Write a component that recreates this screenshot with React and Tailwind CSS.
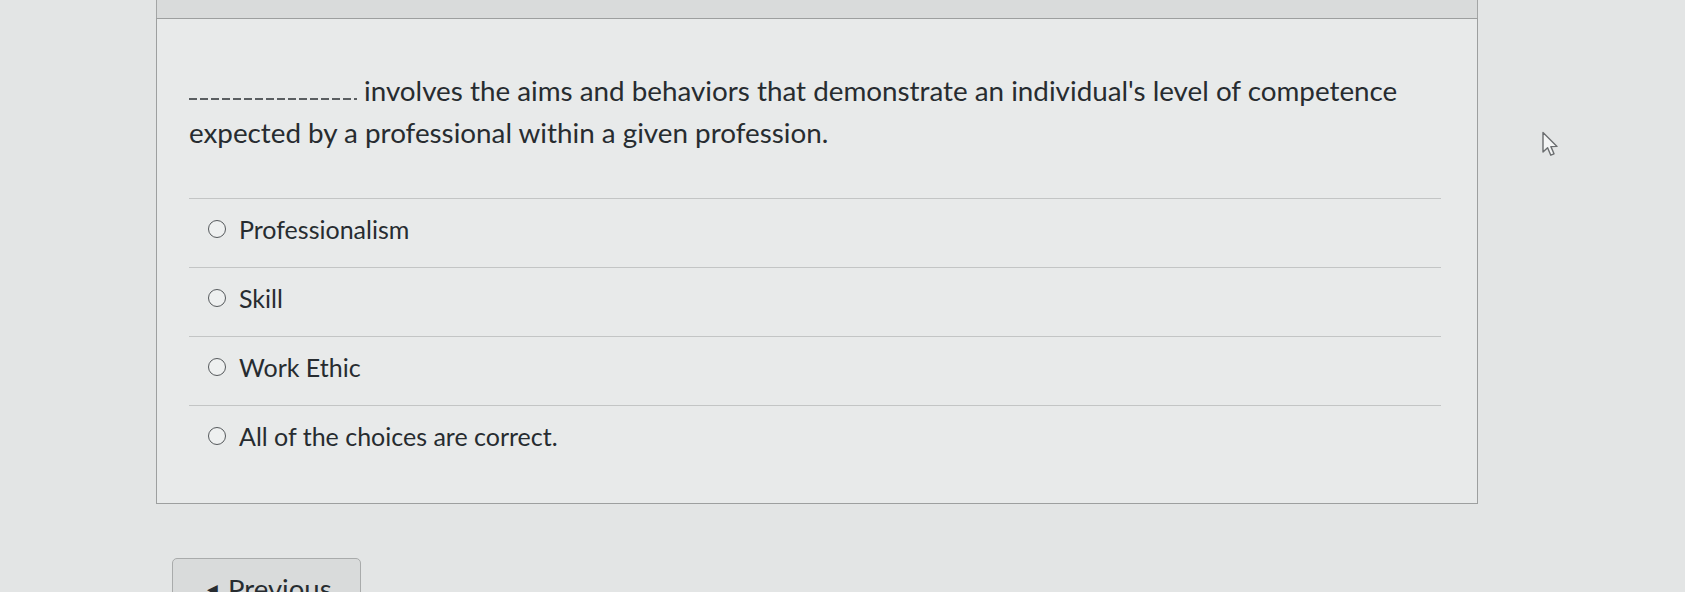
import React from 'react';

const options = ['Professionalism', 'Skill', 'Work Ethic', 'All of the choices are correct.'];

const Cursor = () => (
  <svg className="absolute left-[1541px] top-[131px]" width="20" height="28" viewBox="0 0 20 28" fill="none">
    <path
      d="M2 1.5 L2 21 L6.6 16.8 L9.8 24.2 L13 22.8 L9.9 15.6 L16 15.4 Z"
      fill="#f4f5f5"
      stroke="#6b6e70"
      strokeWidth="1.4"
      strokeLinejoin="round"
    />
  </svg>
);

export default function App() {
  return (
    <div
      className="relative w-[1685px] h-[592px] overflow-hidden bg-[#e3e5e5] text-[#272c30]"
      style={{ fontFamily: 'Lato, "Open Sans", sans-serif' }}
    >
      <div className="ml-[156px] w-[1322px]">
        <div className="h-[18px] bg-[#d9dbdb] border-x border-[#a3a5a5]" />

        <div className="border border-[#9d9f9f] bg-[#e8eaea] pl-[32px] pr-[36px] pt-[51px] pb-[29px]">
          <p className="text-[27.8px] leading-[42px]">
            <span className="inline-block w-[168px] h-[2px] mr-[7px] align-[1px] bg-[repeating-linear-gradient(90deg,#5a5e61_0_8px,transparent_8px_11px)]" />
            involves the aims and behaviors that demonstrate an individual's level of competence expected by a
            professional within a given profession.
          </p>

          <div className="mt-[44px]">
            {options.map((opt) => (
              <div
                key={opt}
                className="flex items-start gap-[13px] pl-[19px] pt-[14px] h-[69px] border-t border-[#c3c5c5]"
              >
                <span className="mt-[7px] w-[18px] h-[18px] shrink-0 rounded-full border-[1.5px] border-[#55595c] bg-[#eef0f0]" />
                <span className="text-[25px] leading-[32px]">{opt}</span>
              </div>
            ))}
          </div>
        </div>

        <div className="mt-[54px] ml-[16px] w-[189px] h-[50px] rounded-t-[5px] border border-[#a9abab] bg-[#d9dbdb] flex items-start pt-[14px] pl-[34px] gap-[10px]">
          <span className="text-[14px] leading-[32px]">◀</span>
          <span className="text-[27.5px] leading-[32px]">Previous</span>
        </div>
      </div>

      <Cursor />
    </div>
  );
}
